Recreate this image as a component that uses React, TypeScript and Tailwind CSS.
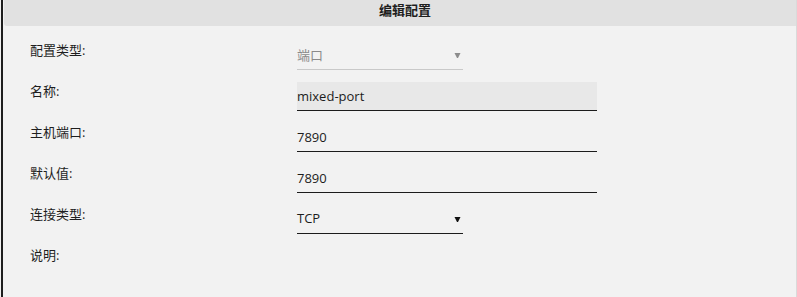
import React from "react";

const cjk = "font-['Open_Sans','Noto_Sans_CJK_SC',sans-serif]";

function Arrow({ dark }: { dark?: boolean }) {
  return (
    <svg width="7" height="7" viewBox="0 0 7 7" className="mr-[2px]">
      <polygon points="0.5,1 6.5,1 4,6 3,6" fill={dark ? "#111" : "#8c8c8c"} />
    </svg>
  );
}

function Select({ value, disabled }: { value: string; disabled?: boolean }) {
  return (
    <div
      className={
        disabled
          ? "flex h-[29px] w-[166px] items-center justify-between border-b border-[#c9c9c9] pt-[1px] text-[#8a8a8a]"
          : "flex h-[29px] w-[166px] items-center justify-between border-b border-[#1c1c1c] text-[#1c1c1c]"
      }
    >
      <span>{value}</span>
      <Arrow dark={!disabled} />
    </div>
  );
}

function Input({ value, filled }: { value: string; filled?: boolean }) {
  return (
    <div
      className={
        filled
          ? "flex h-[29px] w-[300px] items-center border-b border-[#1c1c1c] bg-[#e8e8e8] pt-[2px] text-[#1c1c1c]"
          : "flex h-[29px] w-[300px] items-center border-b border-[#1c1c1c] pt-[2px] text-[#1c1c1c]"
      }
    >
      {value}
    </div>
  );
}

const rows: { label: string; control: React.ReactNode }[] = [
  { label: "配置类型:", control: <Select value="端口" disabled /> },
  { label: "名称:", control: <Input value="mixed-port" filled /> },
  { label: "主机端口:", control: <Input value="7890" /> },
  { label: "默认值:", control: <Input value="7890" /> },
  { label: "连接类型:", control: <Select value="TCP" /> },
  { label: "说明:", control: <div className="h-[29px]" /> },
];

export default function App() {
  return (
    <div className={`h-screen w-full bg-[#f2f2f2] pl-px text-[13px] ${cjk}`}>
      <div className="flex h-full flex-col border-l-2 border-r border-l-[#1e1e1e] border-r-[#dadada] pl-px">
        <div className="flex h-[26px] items-center justify-center rounded-bl-[3px] bg-[#e1e1e1] pb-[4px] pl-[10px] font-bold text-[#1e1e1e]">
          编辑配置
        </div>
        <div className="grid grid-cols-[267px_1fr] gap-y-[12px] pl-[26px] pt-[15px]">
          {rows.map((r) => (
            <React.Fragment key={r.label}>
              <div className="leading-[18px] text-[#1e1e1e]">{r.label}</div>
              <div>{r.control}</div>
            </React.Fragment>
          ))}
        </div>
      </div>
    </div>
  );
}
